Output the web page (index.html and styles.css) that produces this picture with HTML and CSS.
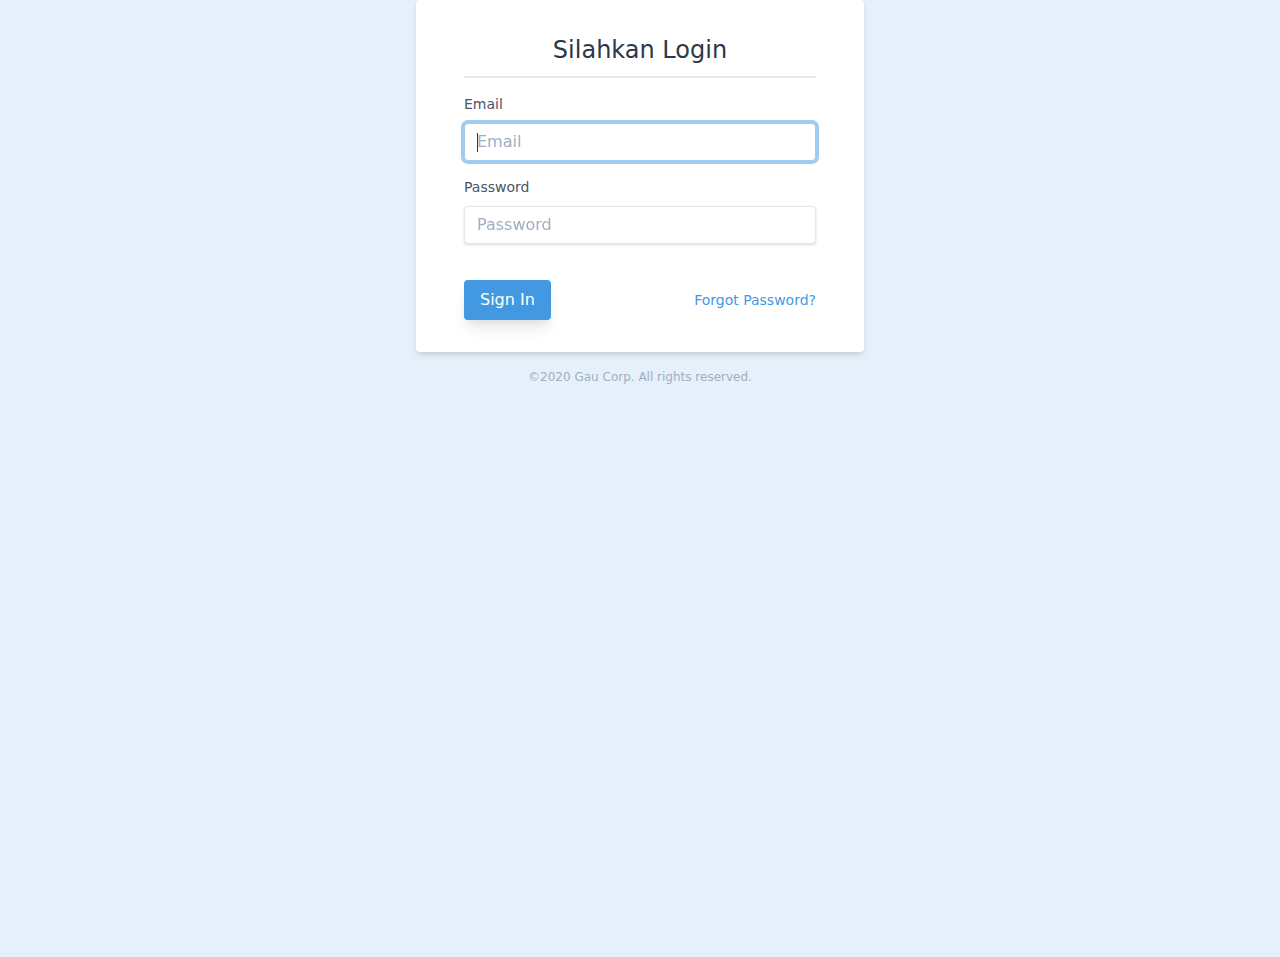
FILE: index.html
```html
<!DOCTYPE html>
<html lang="id">
<head>
    <meta charset="UTF-8">
    <meta name="viewport" content="width=device-width, initial-scale=1.0">
    <title>Login</title>
    <link rel="stylesheet" href="styles.css">
</head>
<body>
    <main class="wrap">
        <form class="card" action="#" method="post">
            <h1 class="title">Silahkan Login</h1>
            <div class="field">
                <label class="label" for="email">Email</label>
                <div class="input-box input-box--caret">
                    <input class="input input--active" id="email" type="email" placeholder="Email" autofocus>
                </div>
            </div>
            <div class="field field--last">
                <label class="label" for="password">Password</label>
                <div class="input-box">
                    <input class="input" id="password" type="password" placeholder="Password">
                </div>
            </div>
            <div class="actions">
                <button class="btn" type="button">Sign In</button>
                <a class="link" href="#">Forgot Password?</a>
            </div>
        </form>
        <p class="footer">&copy;2020 Gau Corp. All rights reserved.</p>
    </main>
</body>
</html>
```

FILE: styles.css
```css
body{
    margin: 0;
    background-color: #e6f0fa;
    font-family: "DejaVu Sans", sans-serif;
    line-height: 1.5;
    min-height: 100vh;
}
.wrap{
    width: 448px;
    margin: 0 auto;
}
.card{
    background-color: #fff;
    border-radius: 4px;
    box-shadow: 0 4px 6px -1px rgba(0, 0, 0, 0.1), 0 2px 4px -1px rgba(0, 0, 0, 0.06);
    padding: 32px 48px;
}
.title{
    margin: 0;
    padding-bottom: 8px;
    border-bottom: 2px solid #e2e8f0;
    text-align: center;
    font-size: 24px;
    font-weight: normal;
    line-height: 36px;
    color: #2d3748;
}
.field{
    margin-top: 16px;
}
.field--last{
    margin-bottom: 36px;
}
.label{
    display: block;
    margin-bottom: 8px;
    font-size: 14px;
    line-height: 21px;
    color: #4a5568;
}
.input-box{
    position: relative;
}
.input-box--caret::after{
    content: "";
    position: absolute;
    left: 13px;
    top: 10px;
    width: 1px;
    height: 19px;
    background-color: #2d3748;
}
.input{
    display: block;
    box-sizing: border-box;
    width: 100%;
    margin: 0;
    padding: 8px 12px;
    border: 1px solid #e2e8f0;
    border-radius: 4px;
    box-shadow: 0 1px 3px 0 rgba(0, 0, 0, 0.1), 0 1px 2px 0 rgba(0, 0, 0, 0.06);
    font-family: inherit;
    font-size: 16px;
    line-height: 20px;
    color: #4a5568;
    background: #fff;
    outline: none;
    caret-color: transparent;
}
.input::placeholder{
    color: #a0aec0;
}
.input--active,
.input:focus{
    border-color: #a0ccf0;
    box-shadow: 0 0 0 3px rgba(66, 153, 225, 0.5);
}
.actions{
    display: flex;
    align-items: center;
    justify-content: space-between;
}
.btn{
    padding: 8px 16px;
    border: none;
    border-radius: 4px;
    background-color: #4299e1;
    color: #fff;
    font-family: inherit;
    font-size: 16px;
    line-height: 24px;
    box-shadow: 0 10px 15px -3px rgba(0, 0, 0, 0.1), 0 4px 6px -2px rgba(0, 0, 0, 0.05);
    cursor: pointer;
}
.link{
    font-size: 14px;
    color: #4299e1;
    text-decoration: none;
}
.footer{
    margin: 16px 0 0;
    text-align: center;
    font-size: 12px;
    line-height: 18px;
    color: #a0aec0;
}
```
